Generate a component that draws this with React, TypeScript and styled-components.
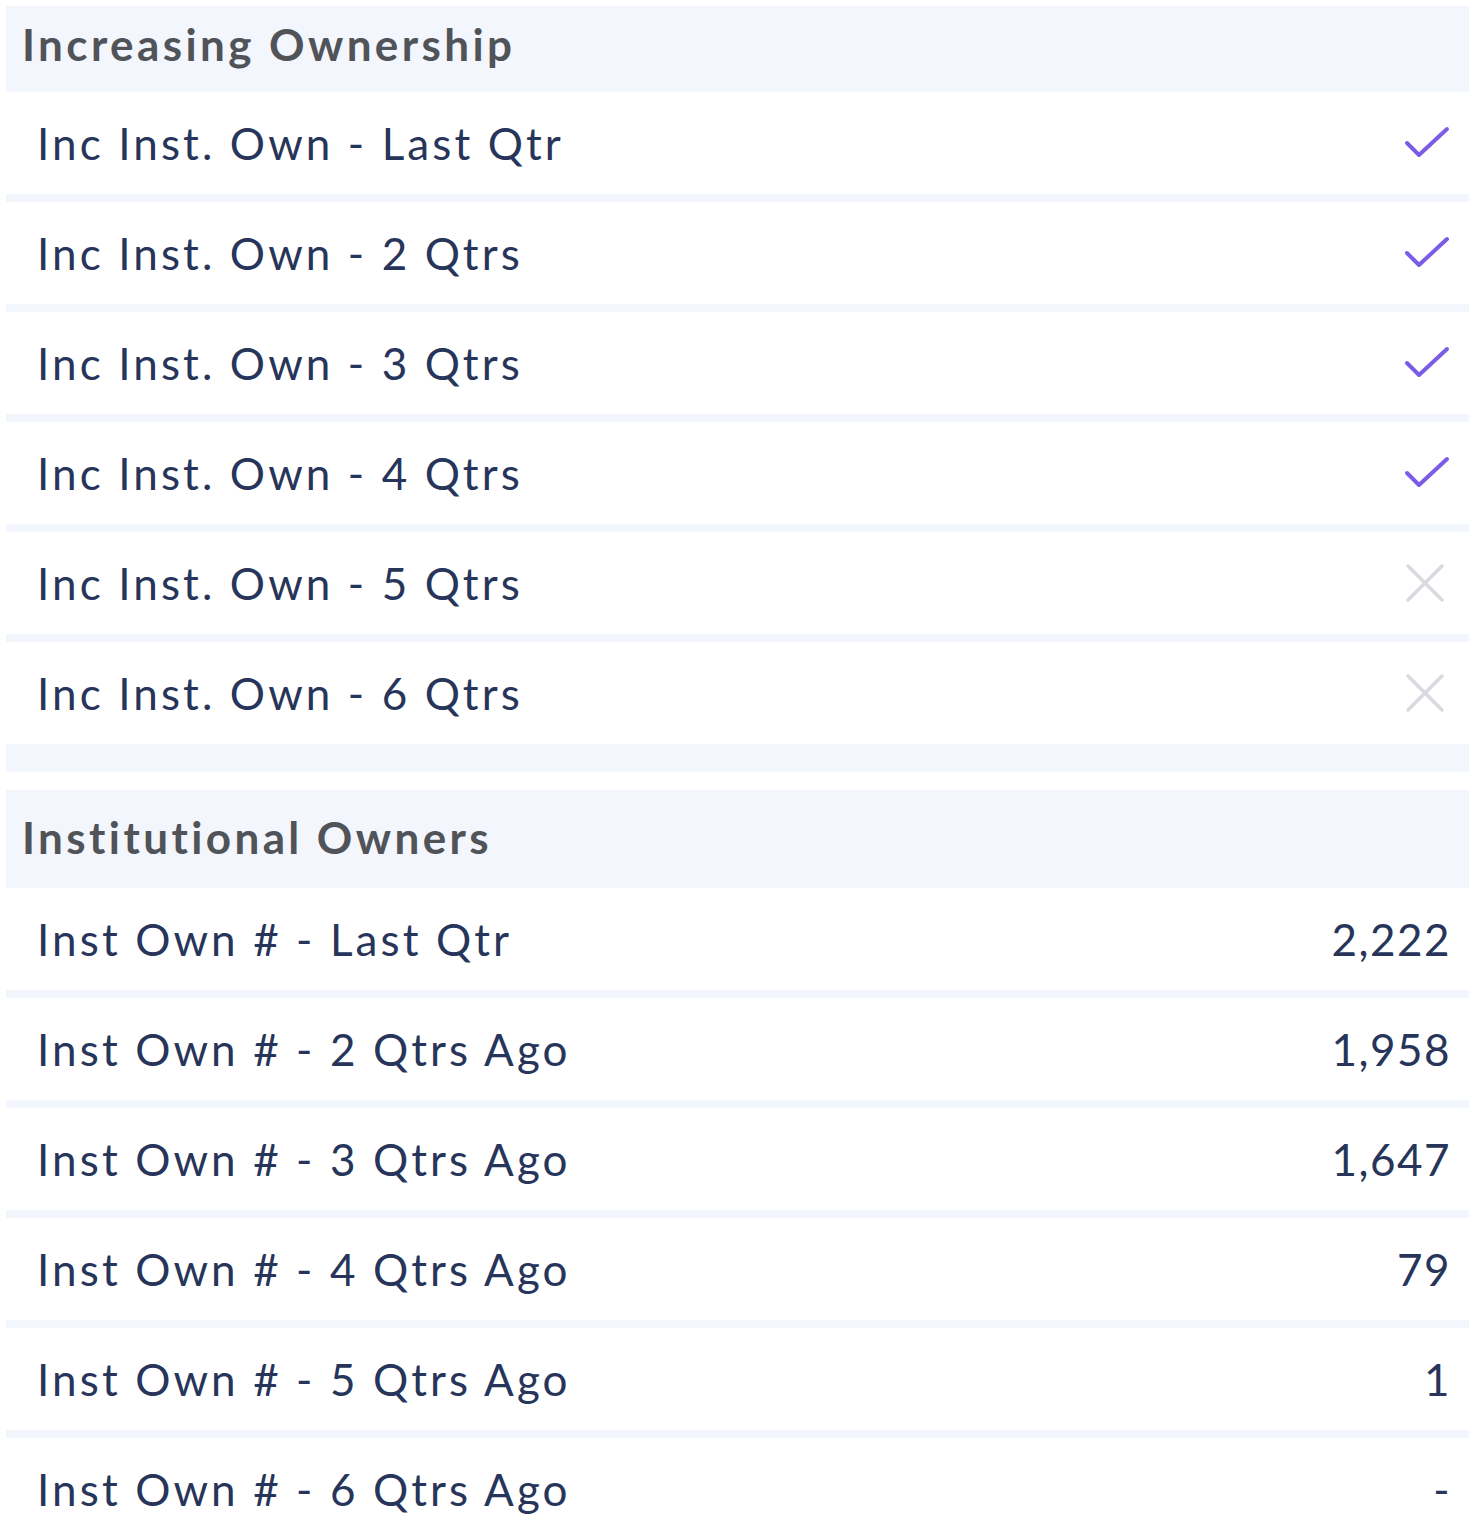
import React from "react";
import styled, { createGlobalStyle } from "styled-components";

const Global = createGlobalStyle`
  body { margin: 0; background: #fff; font-family: "Lato", "Open Sans", sans-serif; }
`;

const Page = styled.div`
  padding: 6px;
  display: flex;
  flex-direction: column;
`;

const Header = styled.div<{ $h: number; $shift?: number }>`
  height: ${(p) => p.$h}px;
  background: #f3f6fd;
  display: flex;
  align-items: center;
  padding-left: 16px;
  padding-bottom: ${(p) => p.$shift ?? 0}px;
  box-sizing: border-box;
  font-size: 44px;
  font-weight: 700;
  color: #505358;
  letter-spacing: 3.4px;
`;

const Row = styled.div<{ $last?: boolean }>`
  height: 102px;
  display: flex;
  align-items: center;
  justify-content: space-between;
  padding: 0 18px 0 31px;
  border-bottom: ${(p) => (p.$last ? "none" : "8px solid #f3f6fd")};
  font-size: 44px;
  color: #28355a;
  letter-spacing: 3.1px;
`;

const Band = styled.div`
  height: 28px;
  background: #f3f6fd;
`;

const Gap = styled.div`
  height: 18px;
`;

const Value = styled.span`
  letter-spacing: 1.5px;
`;

const Check = () => (
  <svg width="48" height="36" viewBox="0 0 48 36" fill="none">
    <path d="M4 18 L16 30 L44 4" stroke="#7b5ce6" strokeWidth="4" strokeLinecap="round" strokeLinejoin="round" />
  </svg>
);

const Cross = () => (
  <svg width="40" height="40" viewBox="0 0 40 40" fill="none" style={{ marginRight: 6 }}>
    <path d="M3 3 L37 37 M37 3 L3 37" stroke="#d9dae0" strokeWidth="3.5" strokeLinecap="round" />
  </svg>
);

const inc = [
  ["Inc Inst. Own - Last Qtr", true],
  ["Inc Inst. Own - 2 Qtrs", true],
  ["Inc Inst. Own - 3 Qtrs", true],
  ["Inc Inst. Own - 4 Qtrs", true],
  ["Inc Inst. Own - 5 Qtrs", false],
  ["Inc Inst. Own - 6 Qtrs", false],
] as const;

const owners = [
  ["Inst Own # - Last Qtr", "2,222"],
  ["Inst Own # - 2 Qtrs Ago", "1,958"],
  ["Inst Own # - 3 Qtrs Ago", "1,647"],
  ["Inst Own # - 4 Qtrs Ago", "79"],
  ["Inst Own # - 5 Qtrs Ago", "1"],
  ["Inst Own # - 6 Qtrs Ago", "-"],
];

export default function App() {
  return (
    <>
      <Global />
      <Page>
        <Header $h={86} $shift={10}>Increasing Ownership</Header>
        {inc.map(([l, ok], i) => (
          <Row key={l} $last={i === inc.length - 1}>
            <span>{l}</span>
            {ok ? <Check /> : <Cross />}
          </Row>
        ))}
        <Band />
        <Gap />
        <Header $h={98} $shift={4}>Institutional Owners</Header>
        {owners.map(([l, v]) => (
          <Row key={l}>
            <span>{l}</span>
            <Value>{v}</Value>
          </Row>
        ))}
      </Page>
    </>
  );
}
